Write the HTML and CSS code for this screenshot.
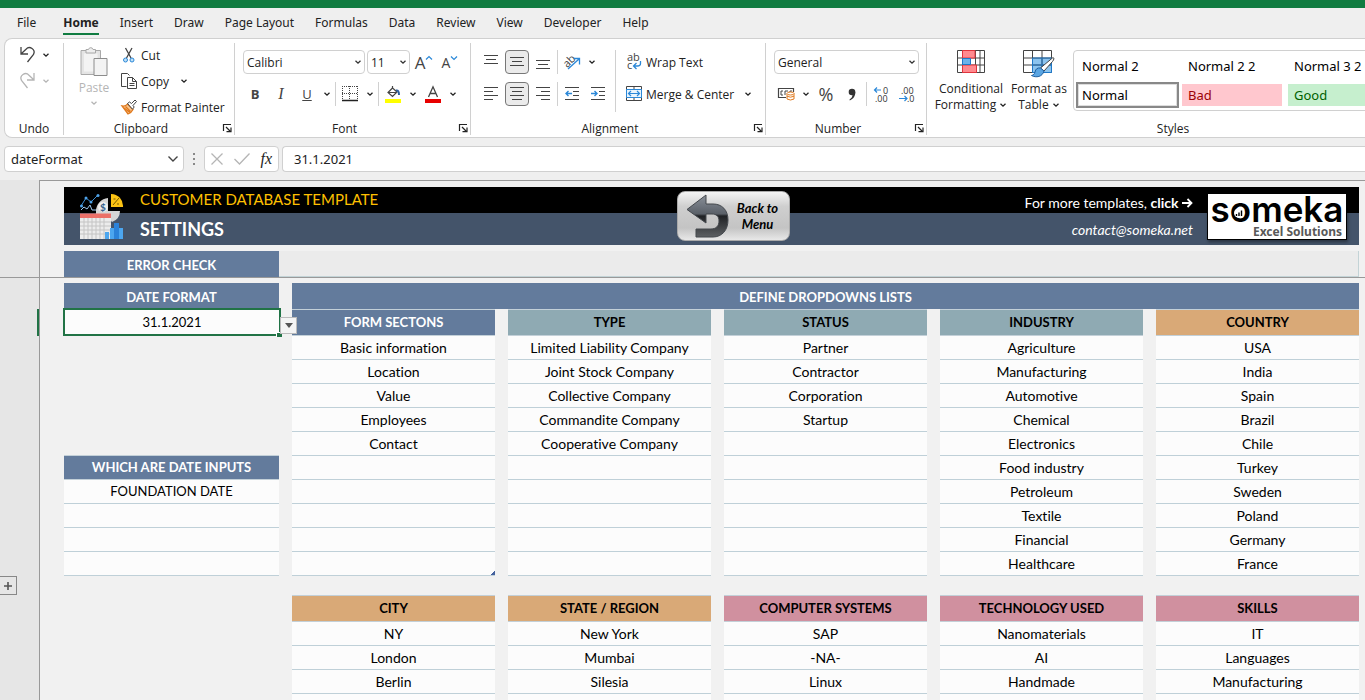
FILE: index.html
```
<!DOCTYPE html>
<html lang="en">
<head>
    <meta charset="UTF-8">
    <meta name="viewport" content="width=device-width, initial-scale=1.0">
    <title>Customer Database Template - Settings</title>
    <link rel="stylesheet" href="styles.css">
</head>
<body>
    <svg class="defs" aria-hidden="true">
        <symbol id="chev" viewBox="0 0 8 8"><path d="M1.500 2.800 4 5.200 6.500 2.800" fill="none" stroke="currentColor" stroke-width="1.300"/></symbol>
        <symbol id="launch" viewBox="0 0 10 10"><path d="M1.500 8V1.500H9M4 4l4 4M9 4.500v4.200H4.500" fill="none" stroke="currentColor" stroke-width="1.200"/></symbol>
    </svg>

    <div class="titlebar"></div>
    <nav class="menu">
        <a href="#">File</a>
        <a href="#" class="active">Home</a>
        <a href="#">Insert</a>
        <a href="#">Draw</a>
        <a href="#">Page Layout</a>
        <a href="#">Formulas</a>
        <a href="#">Data</a>
        <a href="#">Review</a>
        <a href="#">View</a>
        <a href="#">Developer</a>
        <a href="#">Help</a>
    </nav>

    <div class="ribbon">
        <section class="group undo">
            <div class="tools col">
                <div class="row">
                    <button class="tool" aria-label="Undo"><svg width="18" height="18" viewBox="0 0 18 18"><path d="M2 1v7h7M2.500 7.500 7 3.200a4.600 4.600 0 0 1 7.500 5.200L8.500 16" fill="none" stroke="#444" stroke-width="1.300"/></svg></button>
                    <button class="drop" aria-label="Undo history"><svg><use href="#chev"/></svg></button>
                </div>
                <div class="row off">
                    <button class="tool" aria-label="Redo"><svg width="18" height="18" viewBox="0 0 18 18"><path d="M15 1v7H8M14.500 7.500 10 3.200a4.600 4.600 0 0 0-7.500 5.200L8.500 16" fill="none" stroke="#b5b5b5" stroke-width="1.300"/></svg></button>
                    <button class="drop" aria-label="Redo history"><svg><use href="#chev"/></svg></button>
                </div>
            </div>
            <footer><span>Undo</span></footer>
        </section>

        <section class="group clipboard">
            <div class="tools">
                <button class="big off">
                    <svg width="28" height="31" viewBox="0 0 28 31"><path d="M1 4.500h19.500V28.500H1z" fill="#e4e4e4" stroke="#a9a9a9"/><path d="M4 7.500h13.500v18H4z" fill="#f3f3f3"/><path d="M6 7V3.500h2.500a2.300 2.300 0 0 1 4.500 0h2.500V7z" fill="#eee" stroke="#a9a9a9"/><path d="M14 12.500h13v17H14z" fill="#f3f3f3" stroke="#8c8c8c"/></svg>
                    <span>Paste</span>
                    <svg class="chev"><use href="#chev"/></svg>
                </button>
                <div class="col">
                    <button class="line"><svg width="16" height="16" viewBox="0 0 16 16"><path d="M4.500 1 10 11M11 1 5.500 11" stroke="#444" stroke-width="1.300" fill="none"/><circle cx="4.500" cy="13" r="2" fill="#bfe0f7" stroke="#2b88d8"/><circle cx="11" cy="13" r="2" fill="#bfe0f7" stroke="#2b88d8"/></svg>Cut</button>
                    <div class="row">
                        <button class="line"><svg width="16" height="16" viewBox="0 0 16 16"><path d="M5.500 13.500h-5V.5h6l2 2" fill="none" stroke="#444"/><path d="M6.500 4.500h5l4 4v7h-9zM11.500 4.500v4h4M8.500 10.500h5M8.500 12.500h5" fill="#fff" stroke="#444"/></svg>Copy</button>
                        <button class="drop" aria-label="Copy options"><svg><use href="#chev"/></svg></button>
                    </div>
                    <button class="line"><svg width="16" height="16" viewBox="0 0 16 16"><path d="M1 7c3 .5 4.500-.5 5.500-2L12 10.500c-1 2-2.500 3.500-5 4.500z" fill="#fbc58c" stroke="#e07a1f" stroke-width="1.300"/><path d="m3 9 6 4.500M4.500 7.500l5 5" stroke="#e07a1f" stroke-width="1.300"/><path d="m6.500 4.500 2-1.500 2 1.500L14 1l1.500 1.500-3.500 4 1.200 1.500-1.700 2.200z" fill="#fff" stroke="#444"/></svg>Format Painter</button>
                </div>
            </div>
            <footer><span>Clipboard</span><button aria-label="Clipboard settings"><svg><use href="#launch"/></svg></button></footer>
        </section>

        <section class="group font">
            <div class="tools col">
                <div class="row">
                    <select class="combo font-name" aria-label="Font"><option>Calibri</option></select>
                    <select class="combo font-size" aria-label="Font size"><option>11</option></select>
                    <button class="tool grow" aria-label="Increase font size">A<svg><path d="M1 5.500 4 2.500l3 3" fill="none" stroke="#2b88d8" stroke-width="1.200"/></svg></button>
                    <button class="tool grow shrink" aria-label="Decrease font size">A<svg><path d="m1 2.500 3 3 3-3" fill="none" stroke="#2b88d8" stroke-width="1.200"/></svg></button>
                </div>
                <div class="row">
                    <button class="tool"><b>B</b></button>
                    <button class="tool"><i class="serif">I</i></button>
                    <button class="tool"><u>U</u></button>
                    <button class="drop" aria-label="Underline options"><svg><use href="#chev"/></svg></button>
                    <span class="sep"></span>
                    <button class="tool" aria-label="Borders"><svg width="16" height="16" viewBox="0 0 16 16"><path d="M0 .5h16M0 7.500h16M.5 0v14M7.500 0v14M15.500 0v14" stroke="#444" stroke-dasharray="1 1"/><path d="M0 14.500h16" stroke="#222" stroke-width="1.500"/></svg></button>
                    <button class="drop" aria-label="Border options"><svg><use href="#chev"/></svg></button>
                    <span class="sep"></span>
                    <button class="tool" aria-label="Fill color"><svg width="16" height="17" viewBox="0 0 16 17"><path d="M7.500 2 3 6.500l4.500 4L12 6 7.500 2V0M3 6.500h8" fill="none" stroke="#444" stroke-width="1.200"/><path d="M11 4.500c2-.5 3 1 3 4.500" fill="none" stroke="#2b5f9e" stroke-width="2"/><path d="M0 13h16v4H0z" fill="#ff0"/></svg></button>
                    <button class="drop" aria-label="Fill options"><svg><use href="#chev"/></svg></button>
                    <button class="tool" aria-label="Font color"><svg width="16" height="17" viewBox="0 0 16 17"><path d="M3.500 11 8 .8 12.500 11M5 7.500h6" fill="none" stroke="#444" stroke-width="1.300"/><path d="M0 13h16v4H0z" fill="#e80000"/></svg></button>
                    <button class="drop" aria-label="Font color options"><svg><use href="#chev"/></svg></button>
                </div>
            </div>
            <footer><span>Font</span><button aria-label="Font settings"><svg><use href="#launch"/></svg></button></footer>
        </section>

        <section class="group alignment">
            <div class="tools">
                <div class="col">
                    <div class="row">
                        <button class="tool" aria-label="Top align"><svg width="14" height="14" viewBox="0 0 14 14"><path d="M0 .5h14M2 4.500h10M0 8.500h14" stroke="#444"/></svg></button>
                        <button class="tool on" aria-label="Middle align"><svg width="14" height="14" viewBox="0 0 14 14"><path d="M0 2.500h14M2 6.500h10M0 10.500h14" stroke="#444"/></svg></button>
                        <button class="tool" aria-label="Bottom align"><svg width="14" height="14" viewBox="0 0 14 14"><path d="M0 5.500h14M2 9.500h10M0 13.500h14" stroke="#444"/></svg></button>
                        <span class="sep"></span>
                        <button class="tool" aria-label="Orientation"><svg width="18" height="18" viewBox="0 0 18 18"><text x="0" y="13" transform="rotate(-45 5 9)" font-size="11" fill="#444">ab</text><path d="m5 16 11-10M10.500 5.500H16.500V11.500" fill="none" stroke="#2b88d8" stroke-width="1.300"/></svg></button>
                        <button class="drop" aria-label="Orientation options"><svg><use href="#chev"/></svg></button>
                    </div>
                    <div class="row">
                        <button class="tool" aria-label="Align left"><svg width="14" height="14" viewBox="0 0 14 14"><path d="M0 .5h14M0 4.500h9M0 8.500h14M0 12.500h9" stroke="#444"/></svg></button>
                        <button class="tool on" aria-label="Center"><svg width="14" height="14" viewBox="0 0 14 14"><path d="M0 .5h14M2 4.500h10M0 8.500h14M2 12.500h10" stroke="#444"/></svg></button>
                        <button class="tool" aria-label="Align right"><svg width="14" height="14" viewBox="0 0 14 14"><path d="M0 .5h14M5 4.500h9M0 8.500h14M5 12.500h9" stroke="#444"/></svg></button>
                        <span class="sep"></span>
                        <button class="tool" aria-label="Decrease indent"><svg width="14" height="14" viewBox="0 0 14 14"><path d="M0 .5h14M8 4.500h6M8 8.500h6M0 12.500h14" stroke="#444"/><path d="M7 6.500H1M3.500 4 1 6.500 3.500 9" fill="none" stroke="#2b88d8" stroke-width="1.400"/></svg></button>
                        <button class="tool" aria-label="Increase indent"><svg width="14" height="14" viewBox="0 0 14 14"><path d="M0 .5h14M8 4.500h6M8 8.500h6M0 12.500h14" stroke="#444"/><path d="M0 6.500h6M3.500 4 6 6.500 3.500 9" fill="none" stroke="#2b88d8" stroke-width="1.400"/></svg></button>
                    </div>
                </div>
                <span class="sep tall"></span>
                <div class="col">
                    <button class="line"><svg width="16" height="18" viewBox="0 0 16 18"><text x="1" y="8" font-size="11" fill="#444">ab</text><text x="1" y="16" font-size="11" fill="#444">c</text><path d="M14.500 8v2.500q0 2.500-3 2.500H8M10.500 10 7.500 13l3 3" fill="none" stroke="#2b88d8" stroke-width="1.300"/></svg>Wrap Text</button>
                    <div class="row">
                        <button class="line"><svg width="16" height="16" viewBox="0 0 16 16"><path d="M.5.5h15v14H.5zM8 .5v3M8 11.500v3" fill="none" stroke="#444"/><path d="M.5 3.500h15v8H.5z" fill="#e9f4fc" stroke="#2b88d8"/><path d="M3 7.500h10M5 5 2.500 7.500 5 10M11 5l2.500 2.500L11 10" fill="none" stroke="#2b88d8" stroke-width="1.200"/></svg>Merge &amp; Center</button>
                        <button class="drop merge-drop" aria-label="Merge options"><svg><use href="#chev"/></svg></button>
                    </div>
                </div>
            </div>
            <footer><span>Alignment</span><button aria-label="Alignment settings"><svg><use href="#launch"/></svg></button></footer>
        </section>

        <section class="group number">
            <div class="tools col">
                <div class="row"><select class="combo format" aria-label="Number format"><option>General</option></select></div>
                <div class="row">
                    <button class="tool" aria-label="Accounting format"><svg width="17" height="14" viewBox="0 0 17 14"><path d="M8 10.500H.5v-9h15V5" fill="none" stroke="#444" stroke-width="1.200"/><path d="M5 4H3v4h2M7 8V4h3M12 6V4h2" fill="none" stroke="#444"/><path d="M9 6.500v5.500q3.500 2 7 0V6.500" fill="#fff" stroke="#e07a1f"/><ellipse cx="12.500" cy="6.500" rx="3.500" ry="1.500" fill="#fff" stroke="#e07a1f"/><path d="M9 9.200q3.500 2 7 0" fill="none" stroke="#e07a1f"/></svg></button>
                    <button class="drop" aria-label="Accounting options"><svg><use href="#chev"/></svg></button>
                    <button class="tool percent">%</button>
                    <button class="tool" aria-label="Comma style"><svg width="8" height="13" viewBox="0 0 8 13"><circle cx="4" cy="4" r="3.300" fill="#333"/><path d="M7.300 4c.2 4-2 7-5.500 8.500L1.500 11.500C4 10 4.500 8.500 4.500 6z" fill="#333"/></svg></button>
                    <span class="sep"></span>
                    <button class="tool" aria-label="Increase decimal"><svg width="17" height="17" viewBox="0 0 17 17"><text x="10" y="8" font-size="9" fill="#333">0</text><text x="2" y="16" font-size="9" fill="#333">.00</text><path d="M8 4H1.500M4 1.500 1.500 4 4 6.500" fill="none" stroke="#2b88d8" stroke-width="1.200"/></svg></button>
                    <button class="tool" aria-label="Decrease decimal"><svg width="17" height="17" viewBox="0 0 17 17"><text x="2" y="8" font-size="9" fill="#333">.00</text><text x="8" y="16" font-size="9" fill="#333">.0</text><path d="M0 12.500h8M5.500 10 8 12.500 5.500 15" fill="none" stroke="#2b88d8" stroke-width="1.200"/></svg></button>
                </div>
            </div>
            <footer><span>Number</span><button aria-label="Number settings"><svg><use href="#launch"/></svg></button></footer>
        </section>

        <section class="group styles">
            <div class="tools">
                <button class="big">
                    <svg width="28" height="23" viewBox="0 0 28 23"><path d="M.5.5h27v22H.5zM.5 8h27M.5 15h27M5.500.5v22M18.500.5v22M23 .5v22" fill="#fff" stroke="#444"/><path d="M5.500.5h12.500V8H5.500zM5.500 15h14v7.500h-14z" fill="#ff8a8f" stroke="#e0343c"/><path d="M5.500 8.500h8v6h-8z" fill="#6db3ea" stroke="#1e78c8"/></svg>
                    <span>Conditional<br>Formatting <svg class="chev"><use href="#chev"/></svg></span>
                </button>
                <button class="big">
                    <svg width="32" height="29" viewBox="0 0 32 29"><path d="M.5.5h28v22H.5z" fill="#fff" stroke="#444"/><path d="M9.500 8h19v14.500h-19z" fill="#8cc4ef"/><path d="M.5 8h28M.5 15h28M9.500.5v22M19 .5v22" stroke="#444"/><path d="M9.500 8v14.500M19 8v14.500M9.500 8h19v14.500h-19M9.500 15h19" fill="none" stroke="#1e78c8"/><path d="M30 7.500c1.500.5 1 2-.5 4L21 21l-3.500-3z" fill="#fff" stroke="#444"/><path d="M17.500 18c-3-.5-5 1-5.500 4-.5 2-1.500 3-3.500 3.500 4.500 2.500 11 1.500 12.500-4.500z" fill="#5aa5e2" stroke="#1e5fa0"/></svg>
                    <span>Format as<br>Table <svg class="chev"><use href="#chev"/></svg></span>
                </button>
                <div class="gallery">
                    <button>Normal 2</button>
                    <button>Normal 2 2</button>
                    <button>Normal 3 2</button>
                    <button></button>
                    <button class="picked">Normal</button>
                    <button class="bad">Bad</button>
                    <button class="good">Good</button>
                    <button></button>
                </div>
            </div>
            <footer><span>Styles</span></footer>
        </section>
    </div>

    <div class="formula-bar">
        <div class="name-box">
            <input type="text" value="dateFormat" aria-label="Name box">
            <button aria-label="Named ranges"><svg width="10" height="8" viewBox="0 0 10 8"><path d="m.5 1.500 4.500 4.500L9.500 1.500" fill="none" stroke="#444" stroke-width="1.400"/></svg></button>
        </div>
        <svg class="dots" width="2" height="12" viewBox="0 0 2 12"><path d="M0 1h2M0 6h2M0 11h2" stroke="#888" stroke-width="2"/></svg>
        <div class="fx">
            <button aria-label="Cancel"><svg width="12" height="12" viewBox="0 0 12 12"><path d="m.5.5 11 11M11.500.5.5 11.500" stroke="#b5b5b5" stroke-width="1.300"/></svg></button>
            <button aria-label="Enter"><svg width="16" height="12" viewBox="0 0 16 12"><path d="m.5 6 5 5L15.500.5" fill="none" stroke="#b5b5b5" stroke-width="1.300"/></svg></button>
            <button class="serif"><i>fx</i></button>
        </div>
        <input class="formula" type="text" value="31.1.2021" aria-label="Formula">
    </div>

    <main class="sheet">
        <div class="pane frozen">
            <div class="gutter"></div>
            <div class="cells">
                <header class="banner">
                    <svg class="badge" width="44" height="45" viewBox="0 0 44 45">
                        <path d="M1 12 6 4l5 4 7-7" fill="none" stroke="#3d8fd6"/><path d="M1 16l3-3 3 2 3-4 2 5h5" fill="none" stroke="#9cc7ee"/>
                        <g fill="#4ea3ea"><circle cx="1.500" cy="12" r="1.500"/><circle cx="6" cy="4" r="1.500"/><circle cx="11" cy="8" r="1.500"/><circle cx="18" cy="1.500" r="1.500"/></g>
                        <path d="M28 4a13 13 0 0 0-12 13v4h10l6 7a12 12 0 0 0 8-11H28z" fill="#d5d5d5"/>
                        <path d="M31 0a12 12 0 0 1 12 13H31z" fill="#fcc314"/>
                        <circle cx="23" cy="13" r="5" fill="#eee"/>
                        <text x="20" y="17" font-size="10" font-weight="700" fill="#345f8c">$</text>
                        <path d="m33 11 6-7M33.500 5h2M37 10h2" stroke="#775a00"/>
                        <path d="M0 23h31v22H0z" fill="#ececec"/><path d="M0 19.500h31V24H0z" fill="#ec7068"/>
                        <path d="M0 28h31M0 32h31M0 36h31M0 40h31M4 24v21M8 24v21M12 24v21M16 24v21M20 24v21M24 24v21" stroke="#c4c4c4"/>
                        <path d="M25 38h4v7h-4zM30 34h4v11h-4zM39 34h4v11h-4z" fill="#4ca6ef"/><path d="M34 29h5v16h-5z" fill="#2b82d9"/>
                    </svg>
                    <div class="titles"><p>CUSTOMER DATABASE TEMPLATE</p><h1>SETTINGS</h1></div>
                    <button class="back">
                        <svg width="42" height="44" viewBox="0 0 42 44">
                            <defs><linearGradient id="steel" x1="0" y1="0" x2="0" y2="1"><stop offset="0" stop-color="#8a9099"/><stop offset=".45" stop-color="#5a6068"/><stop offset=".5" stop-color="#1f2124"/><stop offset="1" stop-color="#5d6063"/></linearGradient></defs>
                            <path d="M0 15.500 19 1v9h7c9 0 15 6 15 16s-6 17-15 17H9v-8h15c5 0 8-3 8-8s-3-7-7-7h-6v9z" fill="url(#steel)" stroke="#44484d"/>
                        </svg>
                        <span>Back to<br>Menu</span>
                    </button>
                    <div class="links">
                        <a href="#">For more templates, <b>click <svg width="11" height="10" viewBox="0 0 11 10"><path d="M0 5h9.500M5.500 1l4 4-4 4" fill="none" stroke="#fff" stroke-width="1.800"/></svg></b></a>
                        <a href="#"><i>contact@someka.net</i></a>
                    </div>
                    <a href="#" class="logo">
                        <span class="word">someka</span>
                        <span class="tag">Excel Solutions</span>
                        <svg class="bars" width="10" height="10" viewBox="0 0 10 10"><circle cx="5" cy="5" r="5" fill="#fff"/><path d="M2.500 8V6M5 8V4.500M7.500 8V2.500" stroke="#000" stroke-width="1.400"/></svg>
                    </a>
                </header>
                <div class="error-row"><div class="head">ERROR CHECK</div><div class="result"></div></div>
            </div>
        </div>

        <div class="pane">
            <div class="gutter"><div class="row-mark"></div><button class="expand" aria-label="Expand rows"><svg width="8" height="8" viewBox="0 0 8 8"><path d="M0 4h8M4 0v8" stroke="#555" stroke-width="1.600"/></svg></button></div>
            <div class="cells body">
                <div class="side">
                    <label class="head" for="date-format">DATE FORMAT</label>
                    <div class="active-cell">
                        <select id="date-format"><option>31.1.2021</option></select>
                        <span class="handle"></span>
                        <span class="arrow"><svg width="8" height="5" viewBox="0 0 8 5"><path d="M0 0h8L4 5z" fill="#555"/></svg></span>
                    </div>
                    <table class="list inputs">
                        <tr><th class="blue">WHICH ARE DATE INPUTS</th></tr>
                        <tr><td>FOUNDATION DATE</td></tr>
                        <tr><td></td></tr>
                        <tr><td></td></tr>
                        <tr><td></td></tr>
                    </table>
                </div>
                <div class="dropdowns">
                    <h2 class="head">DEFINE DROPDOWNS LISTS</h2>
                    <div class="lists">
                        <table class="list">
                            <tr><th class="blue">FORM SECTONS</th></tr>
                            <tr><td>Basic information</td></tr>
                            <tr><td>Location</td></tr>
                            <tr><td>Value</td></tr>
                            <tr><td>Employees</td></tr>
                            <tr><td>Contact</td></tr>
                            <tr><td></td></tr>
                            <tr><td></td></tr>
                            <tr><td></td></tr>
                            <tr><td></td></tr>
                            <tr><td class="corner"></td></tr>
                        </table>
                        <table class="list">
                            <tr><th class="teal">TYPE</th></tr>
                            <tr><td>Limited Liability Company</td></tr>
                            <tr><td>Joint Stock Company</td></tr>
                            <tr><td>Collective Company</td></tr>
                            <tr><td>Commandite Company</td></tr>
                            <tr><td>Cooperative Company</td></tr>
                            <tr><td></td></tr>
                            <tr><td></td></tr>
                            <tr><td></td></tr>
                            <tr><td></td></tr>
                            <tr><td></td></tr>
                        </table>
                        <table class="list">
                            <tr><th class="teal">STATUS</th></tr>
                            <tr><td>Partner</td></tr>
                            <tr><td>Contractor</td></tr>
                            <tr><td>Corporation</td></tr>
                            <tr><td>Startup</td></tr>
                            <tr><td></td></tr>
                            <tr><td></td></tr>
                            <tr><td></td></tr>
                            <tr><td></td></tr>
                            <tr><td></td></tr>
                            <tr><td></td></tr>
                        </table>
                        <table class="list">
                            <tr><th class="teal">INDUSTRY</th></tr>
                            <tr><td>Agriculture</td></tr>
                            <tr><td>Manufacturing</td></tr>
                            <tr><td>Automotive</td></tr>
                            <tr><td>Chemical</td></tr>
                            <tr><td>Electronics</td></tr>
                            <tr><td>Food industry</td></tr>
                            <tr><td>Petroleum</td></tr>
                            <tr><td>Textile</td></tr>
                            <tr><td>Financial</td></tr>
                            <tr><td>Healthcare</td></tr>
                        </table>
                        <table class="list">
                            <tr><th class="sand">COUNTRY</th></tr>
                            <tr><td>USA</td></tr>
                            <tr><td>India</td></tr>
                            <tr><td>Spain</td></tr>
                            <tr><td>Brazil</td></tr>
                            <tr><td>Chile</td></tr>
                            <tr><td>Turkey</td></tr>
                            <tr><td>Sweden</td></tr>
                            <tr><td>Poland</td></tr>
                            <tr><td>Germany</td></tr>
                            <tr><td>France</td></tr>
                        </table>
                        <table class="list">
                            <tr><th class="sand">CITY</th></tr>
                            <tr><td>NY</td></tr>
                            <tr><td>London</td></tr>
                            <tr><td>Berlin</td></tr>
                            <tr><td></td></tr>
                        </table>
                        <table class="list">
                            <tr><th class="sand">STATE / REGION</th></tr>
                            <tr><td>New York</td></tr>
                            <tr><td>Mumbai</td></tr>
                            <tr><td>Silesia</td></tr>
                            <tr><td></td></tr>
                        </table>
                        <table class="list">
                            <tr><th class="rose">COMPUTER SYSTEMS</th></tr>
                            <tr><td>SAP</td></tr>
                            <tr><td>-NA-</td></tr>
                            <tr><td>Linux</td></tr>
                            <tr><td></td></tr>
                        </table>
                        <table class="list">
                            <tr><th class="rose">TECHNOLOGY USED</th></tr>
                            <tr><td>Nanomaterials</td></tr>
                            <tr><td>AI</td></tr>
                            <tr><td>Handmade</td></tr>
                            <tr><td></td></tr>
                        </table>
                        <table class="list">
                            <tr><th class="rose">SKILLS</th></tr>
                            <tr><td>IT</td></tr>
                            <tr><td>Languages</td></tr>
                            <tr><td>Manufacturing</td></tr>
                            <tr><td></td></tr>
                        </table>
                    </div>
                </div>
            </div>
        </div>
    </main>
</body>
</html>
```

FILE: styles.css
```
* {
    box-sizing: border-box;
}
body {
    margin: 0;
    height: 100vh;
    display: flex;
    flex-direction: column;
    overflow: hidden;
    background: #efefef;
    color: #222;
    font-family: "Noto Sans", "Open Sans", sans-serif;
    font-size: 12px;
}
button, input, select {
    font: inherit;
    color: inherit;
    background: none;
    border: none;
    padding: 0;
    margin: 0;
    outline: none;
}
button svg {
    display: block;
    overflow: visible;
}
a {
    color: inherit;
    text-decoration: none;
}
.defs {
    display: none;
}
.serif {
    font-family: "Liberation Serif", serif;
    font-size: 16px;
}

/* menu */
.titlebar {
    flex: none;
    height: 8px;
    background: #107c41;
}
.menu {
    flex: none;
    display: flex;
    gap: 21px;
    height: 30px;
    padding: 1px 17px;
    line-height: 28px;
}
.menu a {
    height: 26px;
    white-space: nowrap;
}
.menu a:first-child {
    margin-right: 6px;
}
.menu .active {
    font-weight: bold;
    border-bottom: 2px solid #107c41;
}

/* ribbon */
.ribbon {
    flex: none;
    display: flex;
    height: 100px;
    margin-left: 4px;
    padding: 4px 0 2px;
    background: #fff;
    border: 1px solid #d0d0d0;
    border-right: none;
    border-radius: 8px 0 0 8px;
    overflow: hidden;
    font-family: "Open Sans", sans-serif;
}
.group {
    flex: none;
    display: flex;
    flex-direction: column;
    justify-content: space-between;
    border-right: 1px solid #d0d0d0;
}
.group footer {
    display: flex;
    height: 14px;
    align-items: center;
}
.group footer span {
    flex: 1;
    text-align: center;
}
.group footer button {
    width: 16px;
}
.group footer svg {
    width: 10px;
    height: 10px;
    margin-left: 4px;
}
.tools {
    display: flex;
    padding: 7px 0 0 8px;
}
.col {
    display: flex;
    flex-direction: column;
    gap: 8px;
}
.row {
    display: flex;
    align-items: center;
    gap: 2px;
}
.off {
    color: #b5b5b5;
}
.tool {
    width: 24px;
    height: 24px;
    display: flex;
    align-items: center;
    justify-content: center;
    font-size: 13px;
    color: #444;
}
.on {
    background: #ebebeb;
    border: 1px solid #777;
    border-radius: 4px;
}
.drop {
    width: 12px;
    height: 24px;
    display: flex;
    align-items: center;
    justify-content: center;
}
.drop svg, .chev {
    width: 8px;
    height: 8px;
}
.merge-drop {
    margin-left: 6px;
}
.sep {
    width: 1px;
    height: 24px;
    background: #d0d0d0;
}
.tall {
    height: 62px;
    margin: 0 10px 0 5px;
}
.line {
    height: 24px;
    display: flex;
    align-items: center;
    gap: 4px;
    white-space: nowrap;
}
.big {
    flex: none;
    display: flex;
    flex-direction: column;
    align-items: center;
    line-height: 16px;
}
.combo {
    appearance: none;
    height: 24px;
    padding-left: 3px;
    border: 1px solid #d0d0d0;
    border-radius: 4px;
    background: #fff url("data:image/svg+xml,%3Csvg xmlns='http://www.w3.org/2000/svg' width='8' height='8'%3E%3Cpath d='M1.5 2.8 4 5.2 6.5 2.8' fill='none' stroke='%23333' stroke-width='1.3'/%3E%3C/svg%3E") no-repeat right 2px center;
}
.undo {
    width: 59px;
}
.undo .tools {
    padding: 0 0 0 11px;
    gap: 2px;
}
.undo .row {
    gap: 0;
}
.clipboard {
    width: 171px;
}
.clipboard .tools {
    padding: 0;
}
.clipboard .big {
    width: 57px;
    padding: 3px 0 0 3px;
}
.clipboard .big span {
    margin: 3px 0;
}
.clipboard .col {
    gap: 2px;
}
.clipboard .row {
    gap: 9px;
}
.font {
    width: 236px;
}
.font-name {
    width: 122px;
}
.font-size {
    width: 43px;
}
.grow {
    font-size: 17px;
}
.grow svg {
    width: 8px;
    height: 16px;
}
.shrink {
    font-size: 14px;
}
.alignment {
    width: 295px;
}
.number {
    width: 161px;
}
.format {
    width: 145px;
}
.percent {
    font-size: 18px;
}
.styles {
    width: 492px;
    border-right: none;
}
.styles .tools {
    padding-left: 10px;
}
.styles .big {
    width: 68px;
    gap: 8px;
    white-space: nowrap;
}
.styles .big + .big {
    gap: 2px;
}
.styles .chev {
    display: inline;
}
.gallery {
    flex: none;
    display: grid;
    grid-template-columns: repeat(4, 103px);
    gap: 3px;
    height: 61px;
    padding: 2px;
    border: 1px solid #d0d0d0;
    border-radius: 4px 0 0 4px;
    font-family: "Noto Sans", sans-serif;
    font-size: 13px;
}
.gallery button {
    height: 26px;
    padding-left: 6px;
    text-align: left;
    color: #000;
}
.gallery .picked {
    border: 2px solid #888;
    padding-left: 4px;
    box-shadow: inset 0 0 0 1px #ddd;
}
.gallery .bad {
    background: #ffc7ce;
    color: #9c0006;
    height: 22px;
    margin: 2px 3px 2px 0;
}
.gallery .good {
    background: #c6efce;
    color: #006100;
    height: 22px;
    margin: 2px 3px 2px 0;
}

/* formula bar */
.formula-bar {
    flex: none;
    display: flex;
    align-items: center;
    height: 42px;
    padding-left: 4px;
    font-size: 13px;
}
.name-box, .fx, .formula {
    height: 26px;
    background: #fff;
    border: 1px solid #d0d0d0;
    border-radius: 4px;
}
.name-box {
    width: 180px;
    display: flex;
    align-items: center;
    padding: 0 5px 0 6px;
}
.name-box input {
    flex: 1;
    min-width: 0;
}
.dots {
    margin: 0 9px;
}
.fx {
    width: 75px;
    display: flex;
    align-items: center;
    justify-content: space-between;
    padding: 0 6px;
}
.formula {
    flex: 1;
    margin-left: 3px;
    padding-left: 11px;
    border-right: none;
    border-radius: 4px 0 0 4px;
}

/* sheet */
.sheet {
    flex: 1;
    display: flex;
    flex-direction: column;
    min-height: 0;
    background: #f1f1f1;
    color: #000;
    font-family: Lato, "Open Sans", sans-serif;
    font-size: 14px;
    font-variant-ligatures: none;
}
.pane {
    flex: 1;
    display: flex;
}
.frozen {
    flex: none;
    border-bottom: 1px solid #999;
}
.gutter {
    width: 40px;
    background: #e6e6e6;
    border-right: 1px solid #999;
}
.cells {
    flex: 1;
    padding: 0 6px 0 24px;
}
.frozen .cells {
    border-top: 1px solid #999;
    padding-top: 6px;
}
.banner {
    display: flex;
    align-items: center;
    height: 58px;
    background: linear-gradient(#000 26px, #44546a 26px);
    color: #fff;
}
.badge {
    margin: 0 16px;
}
.titles {
    flex: 4;
}
.titles p, .titles h1 {
    margin: 0;
    font-size: 15px;
    font-weight: normal;
    line-height: 26px;
    color: #ffc000;
}
.titles h1 {
    font-size: 18px;
    font-weight: bold;
    line-height: 34px;
    color: #fff;
}
.back {
    width: 113px;
    height: 50px;
    display: flex;
    align-items: center;
    justify-content: space-between;
    padding: 0 11px 0 9px;
    border-radius: 8px;
    background: linear-gradient(#f4f4f4, #cfcfcf 30%, #c4c4c4 75%, #e8e8e8);
    border: 1px solid #aaa;
    color: #000;
    font-size: 13px;
    font-weight: bold;
    font-style: italic;
    line-height: 16px;
    white-space: nowrap;
}
.links {
    flex: 3;
    display: flex;
    flex-direction: column;
    text-align: right;
    line-height: 27px;
}
.logo {
    position: relative;
    width: 140px;
    height: 47px;
    margin: 0 12px 0 14px;
    display: flex;
    flex-direction: column;
    align-items: center;
    background: #fff;
    border: 1px solid #000;
    color: #000;
    box-shadow: 1px 2px 3px rgba(0, 0, 0, 0.4);
}
.word {
    font: 600 35px/31px Inter, sans-serif;
}
.tag {
    align-self: flex-end;
    margin-right: 4px;
    font: bold 12px/14px "Noto Sans", sans-serif;
    color: #595959;
}
/* chart inside the "o" */
.bars {
    position: absolute;
    left: 26px;
    top: 14px;
}
.head {
    display: block;
    margin: 0;
    height: 26px;
    background: #637b9c;
    color: #fff;
    font-size: 13px;
    font-weight: bold;
    line-height: 28px;
    text-align: center;
}
.error-row {
    display: flex;
    margin-top: 6px;
}
.error-row .head {
    width: 215px;
}
.result {
    flex: 1;
    background: #ebebeb;
    border-right: 1px solid #c3d3d6;
    border-bottom: 1px solid #c3d3d6;
}
.row-mark {
    width: 2px;
    height: 27px;
    margin: 31px 0 240px auto;
    background: #217346;
}
.expand {
    width: 17px;
    height: 19px;
    padding-left: 4px;
    border: 1px solid #888;
    border-left: none;
}
.body {
    display: flex;
    gap: 13px;
    padding-top: 5px;
}
.side {
    width: 215px;
    font-size: 13px;
}
.active-cell {
    position: relative;
    height: 28px;
    margin: -1px -2px 0 -1px;
    border: 2px solid #217346;
    background: #fcfcfc;
}
.active-cell select {
    appearance: none;
    width: 100%;
    height: 100%;
    text-align-last: center;
}
.handle {
    position: absolute;
    right: -3px;
    bottom: -3px;
    width: 6px;
    height: 5px;
    background: #217346;
    border: solid #fff;
    border-width: 1px 0 0 1px;
}
.arrow {
    position: absolute;
    left: 100%;
    top: 7px;
    width: 17px;
    height: 17px;
    margin-left: 1px;
    display: flex;
    align-items: center;
    justify-content: center;
    background: #f4f4f4;
    border: 1px solid #bbb;
}
.dropdowns {
    flex: 1;
}
.lists {
    display: grid;
    grid-template-columns: repeat(5, 1fr);
    gap: 19px 13px;
}
.list {
    width: 100%;
    border-collapse: separate;
    border-spacing: 0;
}
.list th {
    height: 27px;
    padding: 0;
    font-size: 13px;
    line-height: 25px;
    border: solid #c3d0d8;
    border-width: 1px 0;
}
.list td {
    height: 24px;
    padding: 0;
    line-height: 23px;
    text-align: center;
    background: #fcfcfc;
    border-bottom: 1px solid #bfd0d8;
}
.inputs {
    margin-top: 119px;
}
.inputs th {
    height: 25px;
    line-height: 23px;
}
.list .blue {
    background: #637b9c;
    color: #fff;
}
.teal {
    background: #8faab3;
}
.sand {
    background: #d9a977;
}
.rose {
    background: #d0909f;
}
.list .corner {
    background: linear-gradient(135deg, transparent 50%, #44619d 50%) no-repeat right bottom / 4px 4px #fcfcfc;
}
```
